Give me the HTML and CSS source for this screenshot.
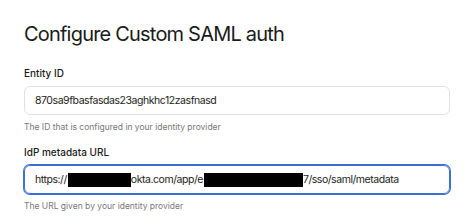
FILE: index.html
```html
<!DOCTYPE html>
<html lang="en">
<head>
    <meta charset="UTF-8">
    <title>Configure Custom SAML auth</title>
    <link rel="stylesheet" href="styles.css">
</head>
<body>
    <div class="page">
        <h1>Configure Custom SAML auth</h1>

        <div class="field">
            <label class="label">Entity ID</label>
            <div class="input">870sa9fbasfasdas23aghkhc12zasfnasd</div>
            <p class="hint">The ID that is configured in your identity provider</p>
        </div>

        <div class="field">
            <label class="label">IdP metadata URL</label>
            <div class="input focused">https://<span class="redact r1"></span>okta.com/app/e<span class="redact r2"></span>7/sso/saml/metadata</div>
            <p class="hint">The URL given by your identity provider</p>
        </div>
    </div>
</body>
</html>
```

FILE: styles.css
```css
body {
    margin: 0;
    background: #fff;
    font-family: 'Inter', 'Liberation Sans', sans-serif;
    color: #1a1a1a;
}
.page {
    padding: 22px 24px 0 24px;
}
h1 {
    font-size: 20px;
    font-weight: 400;
    letter-spacing: -0.8px;
    margin: 0 0 21px 0;
    line-height: 24px;
}
.field {
    margin-bottom: 14px;
}
.label {
    display: block;
    font-size: 10px;
    line-height: 12px;
    font-weight: 500;
    margin-bottom: 7px;
}
.input {
    border: 1px solid #e2e2e2;
    border-radius: 6px;
    height: 27px;
    line-height: 27px;
    padding: 0 10px;
    font-size: 10.5px;
    letter-spacing: -0.45px;
    color: #222;
    white-space: nowrap;
}
.input.focused {
    border-color: #3a6fd6;
    box-shadow: 0 0 0 1px #3a6fd6;
    letter-spacing: -0.45px;
}
.redact {
    display: inline-block;
    background: #000;
    height: 14px;
    vertical-align: middle;
}
.r1 { width: 63px; margin-left: 1px; }
.r2 { width: 99px; margin-left: 1px; }
.hint {
    font-size: 8.5px;
    line-height: 10px;
    color: #777;
    margin: 7px 0 0 0;
}
```
